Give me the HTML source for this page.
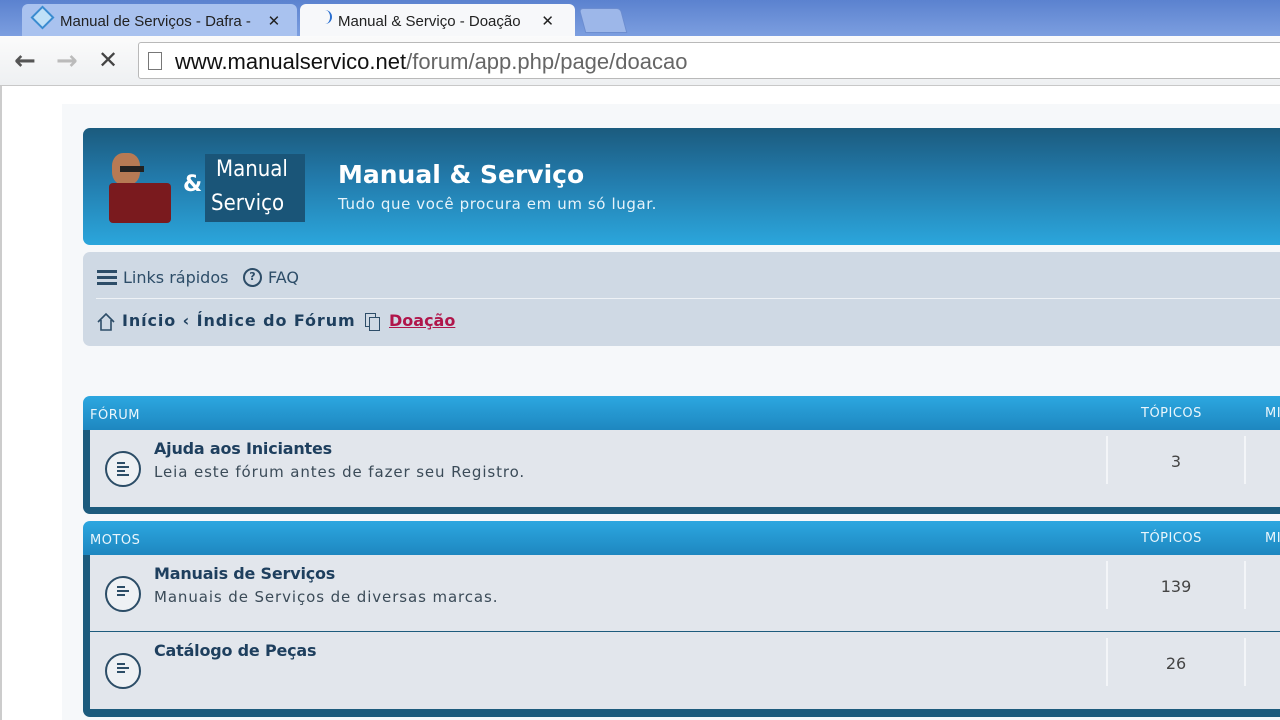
<!DOCTYPE html>
<html><head><meta charset="utf-8"><style>
*{margin:0;padding:0;box-sizing:border-box}
body{width:1280px;height:720px;overflow:hidden;background:#fff;font-family:"DejaVu Sans","Liberation Sans",sans-serif;position:relative}
.abs{position:absolute}
.tabs{left:0;top:0;width:1280px;height:37px;background:linear-gradient(#5b82cf,#7d9fe0)}
.tab{top:4px;height:33px;border-radius:6px 6px 0 0;font-family:"Liberation Sans",sans-serif;font-size:15px;color:#222;padding:8px 0 0 0}
.tb{left:0;top:36px;width:1280px;height:50px;background:linear-gradient(#fbfbfb,#eef0f2);border-bottom:1px solid #c8c8c8}
.url{left:138px;top:42px;width:1150px;height:37px;border:1px solid #b9b9b9;border-radius:3px;background:#fff;font-family:"Liberation Sans",sans-serif;font-size:22px;color:#111;padding:6px 0 0 36px}
.page{left:62px;top:104px;width:1218px;height:616px;background:#f6f8fa}
.hdr{left:83px;top:128px;width:1197px;height:117px;border-radius:7px 0 0 7px;background:linear-gradient(#1b5b7e,#2278a8 40%,#2ba6dc)}
.nav{left:83px;top:252px;width:1197px;height:94px;border-radius:7px 0 0 7px;background:#cfd9e4}
.blk{left:83px;width:1197px;border-radius:7px 0 0 7px;background:linear-gradient(#2ca7e0,#1e87c0 34px,#1d5b7d 34px)}
.bh{height:34px;color:#eaf6fc;font-size:13px;letter-spacing:0.5px;padding:12px 0 0 7px;position:relative}
.row{margin-left:7px;background:#e2e6ec;height:77px;position:relative;border-bottom:1px solid #1d5b7d}
.ic{position:absolute;left:15px;top:21px;width:36px;height:36px;border:2px solid #2c4d67;border-radius:50%;background:#eef1f4}
.ic i{position:absolute;left:10px;height:2px;background:#2c4d67}
.ttl{position:absolute;left:64px;top:9px;font-weight:bold;font-size:16px;color:#1e3f5e;letter-spacing:-0.2px}
.desc{position:absolute;left:64px;top:33px;font-size:15px;color:#3b4b58;letter-spacing:0.9px}
.num{position:absolute;left:1016px;top:6px;width:140px;height:48px;border-left:2px solid #f3f5f8;border-right:2px solid #f3f5f8;text-align:center;font-size:16px;color:#444;padding-top:16px}
</style></head><body>
<div class="abs tabs"></div>
<div class="abs tab" style="left:22px;width:275px;background:#a9c2ef;padding-left:38px">Manual de Serviços - Dafra -&nbsp;&nbsp;&nbsp;&nbsp;✕</div>
<div class="abs" style="left:34px;top:9px;width:17px;height:17px;transform:rotate(45deg);border:2px solid #3a8bd0;background:#bfe0f7"></div>
<div class="abs tab" style="left:300px;width:275px;background:#f7f8fa;padding-left:38px">Manual &amp; Serviço - Doação&nbsp;&nbsp;&nbsp;&nbsp;&nbsp;✕</div>
<div class="abs" style="left:318px;top:10px;width:14px;height:14px;border-radius:50%;border-right:2px solid #2a6fd0"></div>
<div class="abs" style="left:582px;top:8px;width:42px;height:25px;background:#9db7e9;border:1px solid #6c8dd0;border-radius:4px 4px 0 0;transform:skewX(15deg)"></div>
<div class="abs tb"></div>
<div class="abs" style="left:14px;top:46px;font-size:26px;color:#555;font-weight:bold">←</div>
<div class="abs" style="left:56px;top:46px;font-size:26px;color:#bbb;font-weight:bold">→</div>
<div class="abs" style="left:98px;top:46px;font-size:24px;color:#444;font-weight:bold">✕</div>
<div class="abs url">www.manualservico.net<span style="color:#666">/forum/app.php/page/doacao</span></div>
<div class="abs" style="left:148px;top:52px;width:14px;height:18px;border:1px solid #777;background:#fff"></div>
<div class="abs" style="left:0;top:86px;width:2px;height:634px;background:#ccc"></div>
<div class="abs page"></div>
<div class="abs hdr"></div>
<div class="abs" style="left:112px;top:153px;width:28px;height:32px;border-radius:40%;background:#b77a54"></div>
<div class="abs" style="left:120px;top:166px;width:24px;height:6px;background:#222"></div>
<div class="abs" style="left:109px;top:183px;width:62px;height:40px;background:#7a1a1e;border-radius:4px"></div>
<div class="abs" style="left:205px;top:154px;width:100px;height:68px;background:#1a5578"></div>
<div class="abs" style="left:183px;top:172px;color:#fff;font-size:22px;font-weight:bold">&amp;</div>
<div class="abs" style="left:216px;top:157px;color:#fff;font-size:22px;font-family:'DejaVu Sans Condensed',sans-serif">Manual</div>
<div class="abs" style="left:211px;top:191px;color:#fff;font-size:22px;font-family:'DejaVu Sans Condensed',sans-serif">Serviço</div>
<div class="abs" style="left:338px;top:160px;color:#fff;font-size:25px;font-weight:bold">Manual &amp; Serviço</div>
<div class="abs" style="left:338px;top:195px;color:#e6f3fa;font-size:15px;letter-spacing:0.6px">Tudo que você procura em um só lugar.</div>
<div class="abs nav"></div>
<div class="abs" style="left:96px;top:298px;width:1184px;height:1px;background:#eef2f6"></div>
<div class="abs" style="left:97px;top:270px;width:20px;height:15px;border-top:3px solid #2d4d68;border-bottom:3px solid #2d4d68"></div>
<div class="abs" style="left:97px;top:276px;width:20px;height:3px;background:#2d4d68"></div>
<div class="abs" style="left:123px;top:268px;font-size:16px;color:#2d4d68">Links rápidos</div>
<div class="abs" style="left:243px;top:268px;width:19px;height:19px;border:2px solid #2d4d68;border-radius:50%;font-size:11px;text-align:center;color:#2d4d68;font-weight:bold">?</div>
<div class="abs" style="left:268px;top:268px;font-size:16px;color:#2d4d68">FAQ</div>
<svg class="abs" style="left:96px;top:312px" width="20" height="20"><path d="M2 10 L10 2 L18 10 M5 8 V18 H15 V8" fill="none" stroke="#2d4d68" stroke-width="1.6"/></svg>
<div class="abs" style="left:122px;top:311px;font-size:16px;font-weight:bold;color:#1e3f5e;letter-spacing:0.9px">Início ‹ Índice do Fórum</div>
<div class="abs" style="left:365px;top:313px;width:11px;height:14px;border:1.5px solid #2d4d68"></div>
<div class="abs" style="left:369px;top:317px;width:11px;height:14px;border:1.5px solid #2d4d68;background:#cfd9e4"></div>
<div class="abs" style="left:389px;top:311px;font-size:16px;font-weight:bold;color:#b0154a;text-decoration:underline">Doação</div>
<div class="abs blk" style="top:396px;height:118px">
<div class="bh">FÓRUM<span style="position:absolute;left:1058px;top:10px">TÓPICOS</span><span style="position:absolute;left:1182px;top:10px">MI</span></div>
<div class="row" style="border:none"><div class="ic"><i style="top:9px;width:8px"></i><i style="top:13px;width:12px"></i><i style="top:17px;width:8px"></i><i style="top:21px;width:12px"></i></div><div class="ttl">Ajuda aos Iniciantes</div><div class="desc">Leia este fórum antes de fazer seu Registro.</div><div class="num">3</div></div>
</div>
<div class="abs blk" style="top:521px;height:196px">
<div class="bh">MOTOS<span style="position:absolute;left:1058px;top:10px">TÓPICOS</span><span style="position:absolute;left:1182px;top:10px">MI</span></div>
<div class="row"><div class="ic"><i style="top:8px;width:8px"></i><i style="top:12px;width:12px"></i><i style="top:16px;width:8px"></i></div><div class="ttl">Manuais de Serviços</div><div class="desc">Manuais de Serviços de diversas marcas.</div><div class="num">139</div></div>
<div class="row" style="border:none"><div class="ic"><i style="top:8px;width:8px"></i><i style="top:12px;width:12px"></i><i style="top:16px;width:8px"></i></div><div class="ttl">Catálogo de Peças</div><div class="num">26</div></div>
</div>
</body></html>
